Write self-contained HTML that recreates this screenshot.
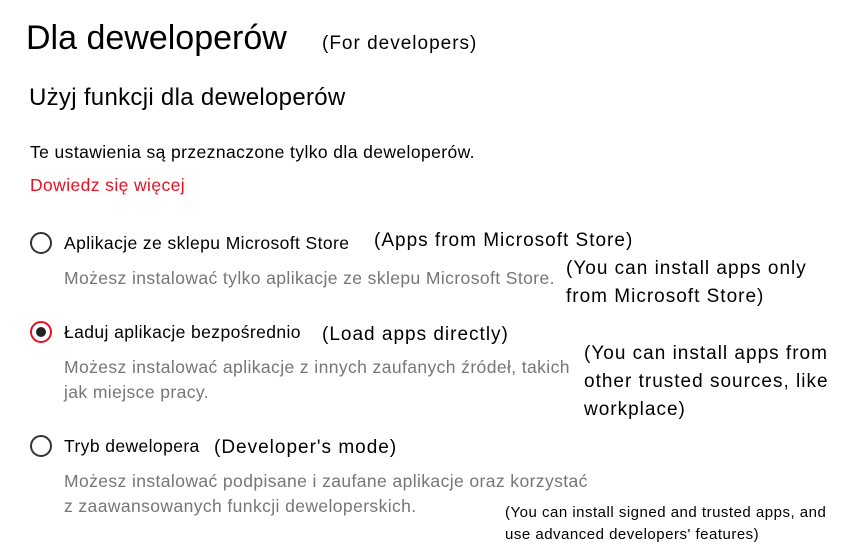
<!DOCTYPE html>
<html><head><meta charset="utf-8"><style>
body{margin:0;width:856px;height:557px;background:#fff;position:relative;overflow:hidden;font-family:"Liberation Sans",sans-serif;}
.t{position:absolute;white-space:nowrap;line-height:1;}
.b{color:#000;font-size:17.5px;letter-spacing:0.4px;}
.g{color:#767676;font-size:17.5px;letter-spacing:0.4px;}
.a{color:#000;font-size:19px;letter-spacing:1px;}
.r{position:absolute;width:18px;height:18px;border:2px solid #333;border-radius:50%;}
.r.s{border-color:#e81123;}
.r.s::after{content:"";position:absolute;left:4px;top:4px;width:10px;height:10px;border-radius:50%;background:#222;}
</style></head><body>
<div class="t" style="left:26px;top:21px;font-size:34px;">Dla deweloperów</div>
<div class="t a" style="left:322px;top:34px;">(For developers)</div>
<div class="t" style="left:29px;top:86px;font-size:24px;letter-spacing:0.3px;">Użyj funkcji dla deweloperów</div>
<div class="t b" style="left:30px;top:144px;">Te ustawienia są przeznaczone tylko dla deweloperów.</div>
<div class="t b" style="left:30px;top:177px;color:#e81123;">Dowiedz się więcej</div>

<div class="r" style="left:30px;top:232px;"></div>
<div class="t b" style="left:64px;top:235px;">Aplikacje ze sklepu Microsoft Store</div>
<div class="t a" style="left:374px;top:231px;">(Apps from Microsoft Store)</div>
<div class="t g" style="left:64px;top:270px;">Możesz instalować tylko aplikacje ze sklepu Microsoft Store.</div>
<div class="t a" style="left:566px;top:259px;">(You can install apps only</div>
<div class="t a" style="left:566px;top:287px;">from Microsoft Store)</div>

<div class="r s" style="left:30px;top:321px;"></div>
<div class="t b" style="left:64px;top:324px;">Ładuj aplikacje bezpośrednio</div>
<div class="t a" style="left:322px;top:325px;">(Load apps directly)</div>
<div class="t g" style="left:64px;top:359px;">Możesz instalować aplikacje z innych zaufanych źródeł, takich</div>
<div class="t g" style="left:64px;top:384px;">jak miejsce pracy.</div>
<div class="t a" style="left:584px;top:344px;">(You can install apps from</div>
<div class="t a" style="left:584px;top:372px;">other trusted sources, like</div>
<div class="t a" style="left:584px;top:400px;">workplace)</div>

<div class="r" style="left:30px;top:435px;"></div>
<div class="t b" style="left:64px;top:438px;">Tryb dewelopera</div>
<div class="t a" style="left:214px;top:438px;">(Developer's mode)</div>
<div class="t g" style="left:64px;top:473px;">Możesz instalować podpisane i zaufane aplikacje oraz korzystać</div>
<div class="t g" style="left:64px;top:498px;">z zaawansowanych funkcji deweloperskich.</div>
<div class="t" style="left:505px;top:505px;font-size:15px;letter-spacing:0.5px;">(You can install signed and trusted apps, and</div>
<div class="t" style="left:505px;top:527px;font-size:15px;letter-spacing:0.5px;">use advanced developers' features)</div>
</body></html>
